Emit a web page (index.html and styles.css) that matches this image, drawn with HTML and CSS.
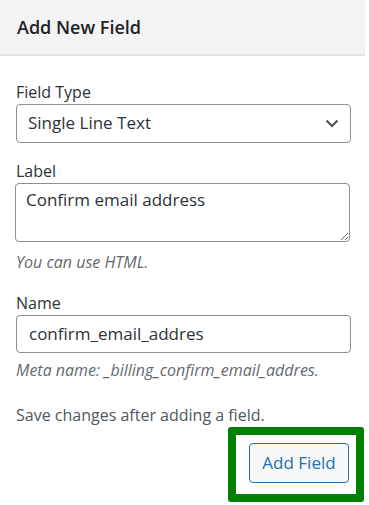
FILE: index.html
```html
<!DOCTYPE html>
<html lang="en">
<head>
    <meta charset="UTF-8">
    <meta name="viewport" content="width=device-width, initial-scale=1.0">
    <title>Add New Field</title>
    <link rel="stylesheet" href="styles.css">
</head>
<body>
    <div class="panel">
        <div class="panel-head">
            <h2>Add New Field</h2>
        </div>

        <div class="panel-body">
            <div class="field">
                <label for="fieldType">Field Type</label>
                <div class="select-wrap">
                    <select id="fieldType">
                        <option>Single Line Text</option>
                    </select>
                    <svg class="chevron" width="14" height="9" viewBox="0 0 14 9">
                        <path d="M1.5 1.5 L7 7 L12.5 1.5" fill="none" stroke="#50575e" stroke-width="2.2"/>
                    </svg>
                </div>
            </div>

            <div class="field">
                <label for="fieldLabel">Label</label>
                <textarea id="fieldLabel" rows="2">Confirm email address</textarea>
                <p class="desc">You can use HTML.</p>
            </div>

            <div class="field">
                <label for="fieldName">Name</label>
                <input id="fieldName" type="text" value="confirm_email_addres">
                <p class="desc">Meta name: _billing_confirm_email_addres.</p>
            </div>

            <p class="note">Save changes after adding a field.</p>

            <div class="actions">
                <div class="highlight">
                    <button type="button">Add Field</button>
                </div>
            </div>
        </div>
    </div>
</body>
</html>
```

FILE: styles.css
```css
body {
    margin: 0;
    font-family: "Open Sans", "Noto Sans", sans-serif;
    color: #1d2327;
    background: #fff;
}
.panel {
    width: 365px;
}
.panel-head {
    height: 54px;
    background: #f3f3f3;
    border-bottom: 2px solid #e3e3e3;
    display: flex;
    align-items: center;
    padding: 0 17px;
}
.panel-head h2 {
    margin: 0;
    font-size: 18px;
    font-weight: 600;
    color: #1d2327;
}
.panel-body {
    padding: 26px 14px 0 16px;
}
.field {
    display: flex;
    flex-direction: column;
    margin-bottom: 18px;
}
.field label {
    display: block;
    font-size: 16px;
    line-height: 20px;
    margin-bottom: 2px;
    color: #2c3338;
}
.select-wrap {
    position: relative;
}
.select-wrap select,
.field input,
.field textarea {
    display: block;
    box-sizing: border-box;
    width: 335px;
    font-family: inherit;
    font-size: 17px;
    color: #2c3338;
    background: #fff;
    border: 1px solid #8c8f94;
    border-radius: 4px;
    margin: 0;
    outline: none;
}
.select-wrap select {
    appearance: none;
    -webkit-appearance: none;
    height: 39px;
    padding: 0 12px 2px 11px;
}
.chevron {
    position: absolute;
    right: 12px;
    top: 15px;
}
.field textarea {
    height: 59px;
    padding: 5px 10px;
    line-height: 22px;
    resize: vertical;
    margin-left: -1px;
    margin-bottom: 3px;
}
.field input {
    height: 38px;
    padding: 0 12px 2px 12px;
}
.desc {
    margin: 6px 0 2px;
    font-size: 16px;
    line-height: 22px;
    font-style: italic;
    color: #646970;
}
.note {
    margin: 0;
    padding-top: 3px;
    font-size: 16px;
    line-height: 22px;
    color: #50575e;
}
.actions {
    display: flex;
    justify-content: flex-end;
    margin-top: 1px;
}
.highlight {
    border: 8px solid #008000;
    border-radius: 3px;
    padding: 8px 7px 11px 13px;
    margin-right: -13px;
}
.highlight button {
    display: block;
    width: 100px;
    height: 40px;
    font-family: inherit;
    font-size: 17px;
    color: #2271b1;
    background: #f6f7f7;
    border: 1px solid #2271b1;
    border-radius: 4px;
    padding: 0 0 2px;
    cursor: pointer;
}
```
